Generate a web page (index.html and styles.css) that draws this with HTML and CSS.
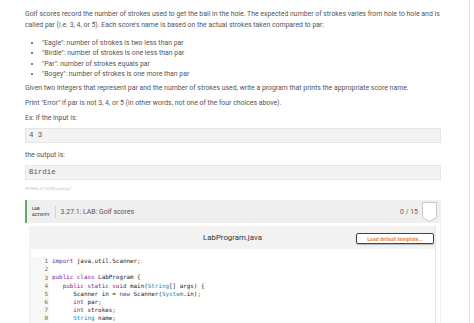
FILE: index.html
```html
<!DOCTYPE html>
<html lang="en">
<head>
  <meta charset="UTF-8" />
  <title>LAB: Golf scores</title>
  <link rel="stylesheet" href="styles.css">
</head>
<body>
  <div class="page">
    <p class="intro">Golf scores record the number of strokes used to get the ball in the hole. The expected number of strokes varies from hole to hole and is called par (i.e. 3, 4, or 5). Each score's name is based on the actual strokes taken compared to par:</p>
    <ul class="scores">
      <li>"Eagle": number of strokes is two less than par</li>
      <li>"Birdie": number of strokes is one less than par</li>
      <li>"Par": number of strokes equals par</li>
      <li>"Bogey": number of strokes is one more than par</li>
    </ul>
    <p>Given two integers that represent par and the number of strokes used, write a program that prints the appropriate score name.</p>
    <p>Print "Error" if par is not 3, 4, or 5 (in other words, not one of the four choices above).</p>
    <p class="ex">Ex: If the input is:</p>
    <pre class="sample">4 3</pre>
    <p class="ex">the output is:</p>
    <pre class="sample">Birdie</pre>
    <div class="ident">909896.3116098.qx3zqy7</div>

    <!-- Lab activity -->
    <div class="lab">
      <div class="lab-header">
        <div class="lab-tag">LAB<br>ACTIVITY</div>
        <div class="lab-title">3.27.1: LAB: Golf scores</div>
        <div class="lab-score">0 / 15</div>
        <svg class="badge" width="15" height="20" viewBox="0 0 15 20">
          <path d="M0.5 0.5 H14.5 V15.5 L7.5 19.5 L0.5 15.5 Z" fill="#fff" stroke="#c8c8c8"/>
        </svg>
      </div>
      <div class="panel">
        <div class="file-bar">
          <span class="file-name">LabProgram.java</span>
          <button class="load">Load default template...</button>
        </div>
        <div class="editor">
          <div class="gutter">
            <div>1</div><div>2</div><div>3</div><div>4</div><div>5</div><div>6</div><div>7</div><div>8</div><div>9</div>
          </div>
          <div class="code">
            <div class="line"><span class="kw">import</span> java.util.Scanner;</div>
            <div class="line"> </div>
            <div class="line"><span class="kw">public class</span> LabProgram {</div>
            <div class="line">   <span class="kw">public static void</span> main(<span class="ty">String</span>[] args) {</div>
            <div class="line">      Scanner in = <span class="kw">new</span> Scanner(<span class="ty">System</span>.in);</div>
            <div class="line">      <span class="kw">int</span> par;</div>
            <div class="line">      <span class="kw">int</span> strokes;</div>
            <div class="line">      <span class="ty">String</span> name;</div>
            <div class="line"> </div>
          </div>
        </div>
      </div>
    </div>
  </div>
</body>
</html>
```

FILE: styles.css
```css
body {
  margin: 0;
  background: #fff;
  color: #555;
  font-family: Roboto, "Noto Sans", sans-serif;
  font-size: 6.9px;
  overflow: hidden;
}

.page {
  width: 416px;
  height: 323px;
  padding: 9px 28px 0 25px;
  border-right: 1px solid #e2e2e2;
  box-sizing: content-box;
}

p {
  margin: 0 0 4px;
  line-height: 11px;
}

.intro {
  margin-bottom: 7px;
}

.scores {
  margin: 0 0 4px;
  padding-left: 17px;
  line-height: 10.3px;
}

.ex {
  margin: 4px 0 4px;
}

.sample {
  margin: 0 0 7px;
  height: 11px;
  padding: 1px 3px;
  background: #f3f3f3;
  border: 1px solid #e6e6e6;
  font-family: "Liberation Mono", monospace;
  font-size: 7.4px;
  line-height: 11px;
  color: #555;
}

.ident {
  font-size: 4px;
  color: #c4c4c4;
  margin: -1px 0 9px;
}

/* Lab activity box */
.lab {
  border-right: 1px solid #f0f0f0;
}

.lab-header {
  display: flex;
  align-items: center;
  height: 23px;
  background: #efefef;
  border-left: 2px solid #6aa56a;
}

.lab-tag {
  font-size: 4px;
  font-weight: bold;
  line-height: 6px;
  color: #555;
  padding: 0 5px;
  border-right: 1px solid #cfcfcf;
}

.lab-title {
  flex: 1;
  padding-left: 5px;
  font-size: 6.9px;
  color: #555;
}

.lab-score {
  font-size: 6.9px;
  color: #666;
  margin-right: 4px;
}

.badge {
  margin-right: 3px;
  margin-top: 1px;
}

.panel {
  margin: 3px 4px 0 4px;
  background: #f2f2f2;
  border-right: 1px solid #e4e4e4;
}

.file-bar {
  display: flex;
  align-items: center;
  justify-content: center;
  position: relative;
  height: 23px;
}

.file-name {
  font-size: 7.8px;
  color: #333;
  margin-left: 1px;
}

.load {
  position: absolute;
  right: 1px;
  top: 7px;
  width: 78px;
  height: 11px;
  padding: 0;
  background: #fff;
  border: 1px solid #444;
  border-radius: 2px;
  box-shadow: 0 1px 1px rgba(0, 0, 0, 0.25);
  color: #e08a4a;
  font-family: Roboto, sans-serif;
  font-size: 5.2px;
  font-weight: bold;
}

.editor {
  display: flex;
  background: #fff;
  margin-left: 2px;
  padding-top: 8px;
  font-family: "DejaVu Sans Mono", monospace;
  font-size: 5.9px;
  line-height: 8.15px;
  height: 80px;
}

.gutter {
  width: 17px;
  padding-right: 1px;
  text-align: right;
  color: #666;
  background: #f8f8f8;
}

.code {
  margin-left: 3px;
  color: #222;
}

.line {
  white-space: pre;
  height: 8.15px;
}

.kw {
  color: #7a2a8a;
}

.ty {
  color: #1e8aa0;
}
```
